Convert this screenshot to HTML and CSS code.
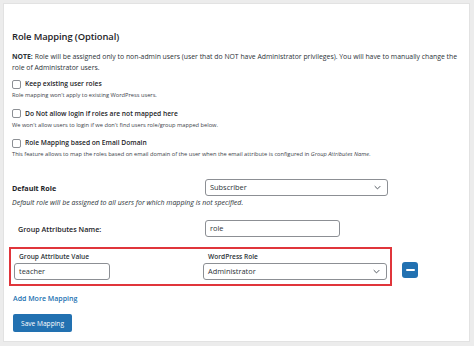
FILE: index.html
```html
<!DOCTYPE html>
<html lang="en">
<head>
  <meta charset="UTF-8">
  <title>Role Mapping</title>
  <link rel="stylesheet" href="styles.css">
</head>
<body>
  <div class="card">
    <h2 class="title">Role Mapping (Optional)</h2>
    <p class="note"><b>NOTE:</b>Role will be assigned only to non-admin users (user that do NOT have Administrator privileges). You will have to manually change the role of Administrator users.</p>

    <div class="option">
      <label class="check"><span class="box"></span>Keep existing user roles</label>
      <p class="hint">Role mapping won't apply to existing WordPress users.</p>
    </div>
    <div class="option">
      <label class="check"><span class="box"></span>Do Not allow login if roles are not mapped here</label>
      <p class="hint">We won't allow users to login if we don't find users role/group mapped below.</p>
    </div>
    <div class="option option-last">
      <label class="check"><span class="box"></span>Role Mapping based on Email Domain</label>
      <p class="hint">This feature allows to map the roles based on email domain of the user when the email attribute is configured in <i>Group Attributes Name</i>.</p>
    </div>

    <div class="field-row default-role">
      <label class="field-label">Default Role</label>
      <div class="select">Subscriber
        <svg class="chev" viewBox="0 0 10 6"><path d="M1 1l4 4 4-4" fill="none" stroke="#50575e" stroke-width="1.4"/></svg>
      </div>
    </div>
    <p class="explain">Default role will be assigned to all users for which mapping is not specified.</p>

    <div class="field-row attr-name">
      <label class="field-label">Group Attributes Name:</label>
      <div class="input attr-input">role</div>
    </div>

    <div class="mapping-line">
      <div class="mapping-box">
        <div class="col col-value">
          <span class="col-label">Group Attribute Value</span>
          <div class="input">teacher</div>
        </div>
        <div class="col col-role">
          <span class="col-label">WordPress Role</span>
          <div class="select">Administrator
            <svg class="chev" viewBox="0 0 10 6"><path d="M1 1l4 4 4-4" fill="none" stroke="#50575e" stroke-width="1.4"/></svg>
          </div>
        </div>
      </div>
      <button class="remove" type="button"><span class="bar"></span></button>
    </div>

    <a class="add-more" href="#">Add More Mapping</a>
    <button class="save" type="button">Save Mapping</button>
  </div>
</body>
</html>
```

FILE: styles.css
```css
* { box-sizing: border-box; }
body {
  margin: 0;
  padding: 3px 4px 4px 3px;
  background: #ececec;
  font-family: 'Open Sans', sans-serif;
  color: #1d2327;
}
.card {
  background: #fff;
  border: 1px solid #e2e2e2;
  padding: 26px 8px 8px 8px;
  height: 339px;
}
.title {
  margin: 0 0 7px;
  font-size: 9.4px;
  letter-spacing: -0.1px;
  line-height: 14px;
  font-weight: 600;
}
.note {
  margin: 0 0 5px;
  font-size: 6.85px;
  line-height: 11px;
  color: #2c3338;
}
.note b { font-weight: 700; margin-right: 2px; }

.option { margin-bottom: 7.5px; }
.check {
  display: flex;
  align-items: center;
  gap: 4px;
  font-size: 6.7px;
  font-weight: 600;
  line-height: 12px;
  color: #1d2327;
}
.box {
  width: 9px;
  height: 9px;
  border: 1px solid #8c8f94;
  border-radius: 2px;
  background: #fff;
}
.hint {
  margin: 0;
  font-size: 5.7px;
  line-height: 10px;
  color: #3c434a;
}
.option-last { margin-bottom: 20px; }

.field-row {
  display: grid;
  grid-template-columns: 193px 183px;
  align-items: center;
}
.field-label {
  font-size: 7.2px;
  font-weight: 700;
}
.select, .input {
  height: 17px;
  border: 1px solid #8c8f94;
  border-radius: 3px;
  background: #fff;
  padding: 0 4px;
  font-size: 7.4px;
  line-height: 15px;
  color: #2c3338;
}
.select {
  display: flex;
  justify-content: space-between;
  align-items: center;
}
.chev { width: 7px; height: 5px; margin-right: 2px; }

.explain {
  margin: 2px 0 12px;
  font-size: 7px;
  font-style: italic;
  line-height: 10px;
  color: #2c3338;
}
.attr-name .field-label {
  padding-left: 6px;
  font-weight: 600;
}
.attr-input { width: 135px; }

.mapping-line {
  display: flex;
  align-items: flex-end;
  gap: 10px;
  margin: 10px 0 0 -3px;
}
.mapping-box {
  width: 383px;
  border: 2px solid #e0353b;
  padding: 2px 3px 4px 3px;
  display: flex;
  justify-content: space-between;
}
.col { display: flex; flex-direction: column; gap: 1px; }
.col-value { width: 96px; }
.col-role { width: 184px; }
.col-label {
  padding-left: 5px;
  font-size: 6.6px;
  font-weight: 600;
  line-height: 11px;
  color: #2c3338;
}
.remove {
  width: 16px;
  height: 16px;
  margin-bottom: 8px;
  border: none;
  border-radius: 3px;
  background: #2271b1;
  padding: 0;
  display: flex;
  align-items: center;
  justify-content: center;
}
.bar {
  width: 9px;
  height: 2px;
  border-radius: 1px;
  background: #fff;
}
.add-more {
  display: block;
  margin: 7px 0 0 1px;
  font-size: 7px;
  font-weight: 600;
  line-height: 11px;
  color: #2271b1;
  text-decoration: none;
}
.save {
  display: block;
  margin: 10px 0 0 1px;
  width: 59px;
  height: 18px;
  border: none;
  border-radius: 2px;
  background: #2271b1;
  color: #fff;
  font-family: 'Open Sans', sans-serif;
  font-size: 6.6px;
  padding: 0;
}
```
